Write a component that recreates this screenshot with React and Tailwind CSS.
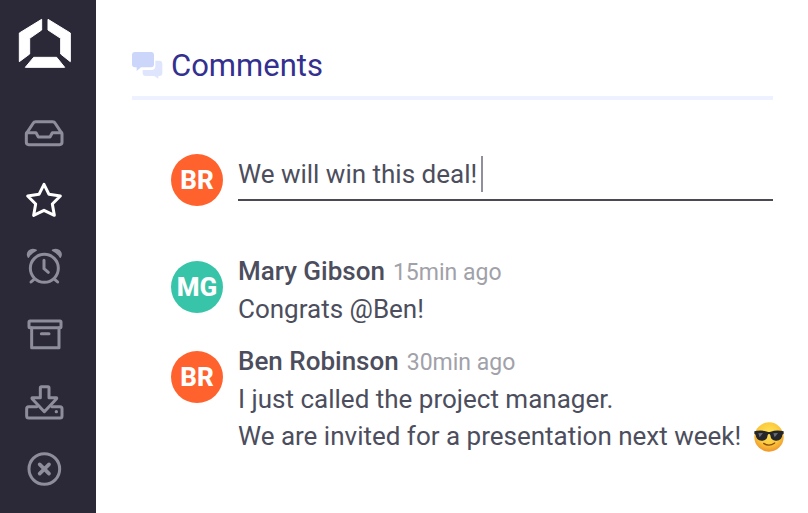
import React, { useState } from 'react';

const comments = [
  {
    id: 1,
    initials: 'MG',
    color: 'bg-[#38c4a8]',
    name: 'Mary Gibson',
    time: '15min ago',
    lines: [{ text: 'Congrats @Ben!' }],
  },
  {
    id: 2,
    initials: 'BR',
    color: 'bg-[#ff622d]',
    name: 'Ben Robinson',
    time: '30min ago',
    lines: [
      { text: 'I just called the project manager.' },
      { text: 'We are invited for a presentation next week!', cool: true },
    ],
  },
];

const navItems = [
  {
    label: 'Inbox',
    icon: (
      <>
        <path d="M7 62 28 30Q30 26 35 26H86Q91 26 93 30L114 62V88Q114 95 107 95H14Q7 95 7 88Z" />
        <path d="M8 59H36L43 72H78L85 59H113" />
      </>
    ),
  },
  {
    label: 'Favorites',
    active: true,
    icon: <path d="M60 13 75 43 109 48 85 72 91 106 60 91 29 106 35 72 11 48 45 43Z" />,
  },
  {
    label: 'Reminders',
    icon: (
      <>
        <circle cx="61" cy="64" r="42" />
        <path d="M60 40V65L73 76M30 97 21 105M92 97 101 105" />
        <path d="M13 30C6 16 20 2 36 10Q21 17 13 30ZM109 30C116 16 102 2 86 10Q101 17 109 30Z" fill="currentColor" strokeWidth="5" />
        <path d="M14 26Q14 12 32 10L20 18ZM108 26Q108 12 90 10L102 18Z" fill="currentColor" strokeWidth="5" />
      </>
    ),
  },
  {
    label: 'Archive',
    icon: (
      <>
        <rect x="15" y="21" width="96" height="20" rx="3" />
        <path d="M23 41V101H105V41M52 59H75" />
      </>
    ),
  },
  {
    label: 'Downloads',
    icon: (
      <>
        <path d="M49 20Q49 17 52 17H72Q75 17 75 20V50H96Q100 50 97 54L61 92 25 54Q22 50 26 50H49Z" />
        <path d="M38 77H14Q8 77 8 83V105Q8 111 14 111H108Q114 111 114 105V83Q114 77 108 77H84" />
        <circle cx="97" cy="92" r="5" fill="currentColor" stroke="none" />
      </>
    ),
  },
  {
    label: 'Close',
    icon: (
      <>
        <circle cx="61" cy="63" r="46" />
        <path d="M47 49 75 77M75 49 47 77" strokeWidth="11" />
      </>
    ),
  },
];

function Logo() {
  return (
    <svg className="size-14 text-white" viewBox="48 48 168 168" fill="currentColor" stroke="currentColor" strokeWidth="3" strokeLinejoin="round" aria-hidden="true">
      <path d="M125 58V90L89 115V162L58 185V99Z" />
      <path d="M144 58 211 99V185L182 162V115L144 90Z" />
      <path d="M101 172H170L194 202H76Z" />
    </svg>
  );
}

function ChatIcon() {
  return (
    <svg className="h-7 w-8 shrink-0" viewBox="0 0 96 84" aria-hidden="true">
      <path d="M70 26H82Q91 26 91 35V63Q91 72 82 72H79V80L67 72H41Q32 72 32 63V54H58Q70 54 70 43Z" fill="#dfe5fd" />
      <path d="M9 0H57Q66 0 66 9V37Q66 46 57 46H27L14 57V46H9Q0 46 0 37V9Q0 0 9 0Z" fill="#ccd6fb" />
    </svg>
  );
}

function CoolFace() {
  return (
    <svg className="ml-3 size-8 shrink-0" viewBox="0 0 96 96" role="img" aria-label="Smiling face with sunglasses">
      <defs>
        <radialGradient id="face" cx="50%" cy="38%" r="62%">
          <stop offset="0" stopColor="#ffe45c" />
          <stop offset="0.6" stopColor="#fccb3c" />
          <stop offset="1" stopColor="#f0952a" />
        </radialGradient>
      </defs>
      <circle cx="48" cy="48" r="44" fill="url(#face)" />
      <path d="M32 67Q48 78 65 66" fill="none" stroke="#8a4b12" strokeWidth="4" strokeLinecap="round" />
      <path d="M4 31Q24 26 43 32Q48 34 53 32Q72 26 92 31V38L88 41Q87 58 70 59Q54 60 52 43Q51 39 48 39Q45 39 44 43Q42 60 26 59Q9 58 8 41L4 38Z" fill="#25262b" />
      <path d="M16 37 30 36 20 49ZM61 37 75 36 65 49Z" fill="#6b6e76" />
    </svg>
  );
}

function Avatar({ initials, color }) {
  return (
    <div className={`flex size-[52px] shrink-0 items-center justify-center rounded-full text-[26px] font-extrabold text-white ${color}`}>
      {initials}
    </div>
  );
}

export default function App() {
  const [draft, setDraft] = useState('We will win this deal!');

  return (
    <div className="flex min-h-screen bg-white font-['Roboto',sans-serif] text-[#4c4e5d]">
      <aside className="flex w-24 shrink-0 flex-col items-center bg-[#2b2937] pt-4 pr-2">
        <a href="#home" aria-label="Home">
          <Logo />
        </a>
        <nav className="mt-[41px] flex flex-col gap-[27px]">
          {navItems.map((item) => (
            <button key={item.label} type="button" aria-label={item.label} className={item.active ? 'text-white' : 'text-[#8e8d9b]'}>
              <svg className="block size-10" viewBox="0 0 120 120" fill="none" stroke="currentColor" strokeWidth="9" strokeLinecap="round" strokeLinejoin="round" aria-hidden="true">
                {item.icon}
              </svg>
            </button>
          ))}
        </nav>
      </aside>

      <main className="min-w-0 flex-1 pt-11 pr-[15px] pl-9">
        <header className="mr-5 flex items-center gap-[7px] border-b-4 border-[#eef1ff] pb-2">
          <ChatIcon />
          <h1 className="text-[31px] leading-11 text-[#33308f]">Comments</h1>
        </header>

        {/* New comment */}
        <form className="mt-[54px] mr-5 flex gap-[15px] pl-[39px]" onSubmit={(e) => e.preventDefault()}>
          <Avatar initials="BR" color="bg-[#ff622d]" />
          <div className="mb-[5px] flex flex-1 items-center border-b-2 border-[#4a4a50] pb-1.5">
            <input
              type="text"
              aria-label="Comment"
              value={draft}
              onChange={(e) => setDraft(e.target.value)}
              className="field-sizing-content max-w-full text-[26px] leading-9 outline-none"
            />
            <span className="ml-1 h-9 w-0.5 bg-[#8f909b]" />
          </div>
        </form>

        <ul className="mt-[47px] flex flex-col gap-[15px] pl-[39px]">
          {comments.map((comment) => (
            <li key={comment.id} className="flex gap-[15px]">
              <div className="pt-2">
                <Avatar initials={comment.initials} color={comment.color} />
              </div>
              <div className="min-w-0 flex-1 text-[26px] leading-[37px]">
                <div className="flex items-baseline gap-2">
                  <h2 className="font-medium">{comment.name}</h2>
                  <span className="text-[23px] leading-[37px] text-[#a1a1a9]">{comment.time}</span>
                </div>
                {comment.lines.map((line) => (
                  <p key={line.text} className="flex items-center">
                    {line.text}
                    {line.cool && <CoolFace />}
                  </p>
                ))}
              </div>
            </li>
          ))}
        </ul>
      </main>
    </div>
  );
}
